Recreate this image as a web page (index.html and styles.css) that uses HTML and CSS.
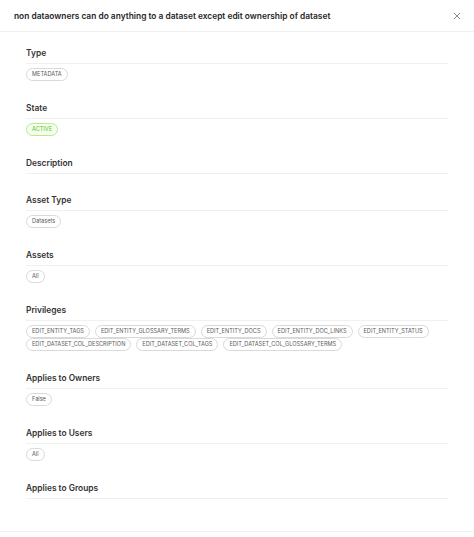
FILE: index.html
```html
<!DOCTYPE html>
<html lang="en">
<head>
    <meta charset="UTF-8">
    <meta name="viewport" content="width=device-width, initial-scale=1.0">
    <title>Policy details</title>
    <link rel="stylesheet" href="styles.css">
</head>
<body>
    <div class="policy-modal">
        <div class="modal-header">
            <h1 class="modal-title">non dataowners can do anything to a dataset except edit ownership of dataset</h1>
            <button class="close-button" aria-label="Close">
                <svg width="8" height="8" viewBox="0 0 8 8">
                    <path d="M1 1L7 7M7 1L1 7" stroke="#8c8c8c" stroke-width="1" fill="none"/>
                </svg>
            </button>
        </div>

        <div class="modal-body">
            <div class="policy-section">
                <h3 class="section-title">Type</h3>
                <div class="section-content">
                    <span class="tag">METADATA</span>
                </div>
            </div>

            <div class="policy-section">
                <h3 class="section-title">State</h3>
                <div class="section-content">
                    <span class="tag tag-active">ACTIVE</span>
                </div>
            </div>

            <div class="policy-section">
                <h3 class="section-title">Description</h3>
                <div class="section-content empty"></div>
            </div>

            <div class="policy-section">
                <h3 class="section-title">Asset Type</h3>
                <div class="section-content">
                    <span class="tag">Datasets</span>
                </div>
            </div>

            <div class="policy-section">
                <h3 class="section-title">Assets</h3>
                <div class="section-content">
                    <span class="tag">All</span>
                </div>
            </div>

            <div class="policy-section">
                <h3 class="section-title">Privileges</h3>
                <div class="section-content">
                    <span class="tag">EDIT_ENTITY_TAGS</span>
                    <span class="tag">EDIT_ENTITY_GLOSSARY_TERMS</span>
                    <span class="tag">EDIT_ENTITY_DOCS</span>
                    <span class="tag">EDIT_ENTITY_DOC_LINKS</span>
                    <span class="tag">EDIT_ENTITY_STATUS</span>
                    <span class="tag">EDIT_DATASET_COL_DESCRIPTION</span>
                    <span class="tag">EDIT_DATASET_COL_TAGS</span>
                    <span class="tag">EDIT_DATASET_COL_GLOSSARY_TERMS</span>
                </div>
            </div>

            <div class="policy-section">
                <h3 class="section-title">Applies to Owners</h3>
                <div class="section-content">
                    <span class="tag">False</span>
                </div>
            </div>

            <div class="policy-section">
                <h3 class="section-title">Applies to Users</h3>
                <div class="section-content">
                    <span class="tag">All</span>
                </div>
            </div>

            <div class="policy-section">
                <h3 class="section-title">Applies to Groups</h3>
                <div class="section-content empty"></div>
            </div>
        </div>

        <div class="modal-footer"></div>
    </div>
</body>
</html>
```

FILE: styles.css
```css
* {
    margin: 0;
    padding: 0;
    box-sizing: border-box;
}

body {
    font-family: 'Inter', 'Open Sans', sans-serif;
    background: #fff;
    color: #262626;
}

.policy-modal {
    display: flex;
    flex-direction: column;
    min-height: 100vh;
}

.modal-header {
    height: 32px;
    padding: 0 10px 0 14px;
    border-bottom: 1px solid #f0f0f0;
    display: flex;
    align-items: center;
    justify-content: space-between;
}

.modal-title {
    font-size: 8.4px;
    font-weight: 600;
    color: #262626;
}

.close-button {
    background: transparent;
    border: none;
    width: 14px;
    height: 14px;
    display: flex;
    align-items: center;
    justify-content: center;
    cursor: pointer;
}

.modal-body {
    flex: 1;
    padding: 14px 26px 0;
}

.policy-section {
    margin-bottom: 19px;
}

.section-title {
    font-size: 8.4px;
    font-weight: 600;
    color: #333;
    line-height: 14px;
    padding-bottom: 3px;
    border-bottom: 1px solid #f0f0f0;
}

.section-content {
    display: flex;
    flex-wrap: wrap;
    gap: 0 5px;
    padding: 4px 0 1px;
}

.section-content.empty {
    padding: 0;
}

.tag {
    display: inline-block;
    height: 13px;
    line-height: 11px;
    padding: 0 5px;
    font-size: 5.6px;
    color: #595959;
    border: 1px solid #d9d9d9;
    border-radius: 7px;
    background: #fff;
}

.tag-active {
    color: #52c41a;
    background: #f6ffed;
    border-color: #b7eb8f;
}

.modal-footer {
    height: 6px;
    border-top: 1px solid #f0f0f0;
}
```
